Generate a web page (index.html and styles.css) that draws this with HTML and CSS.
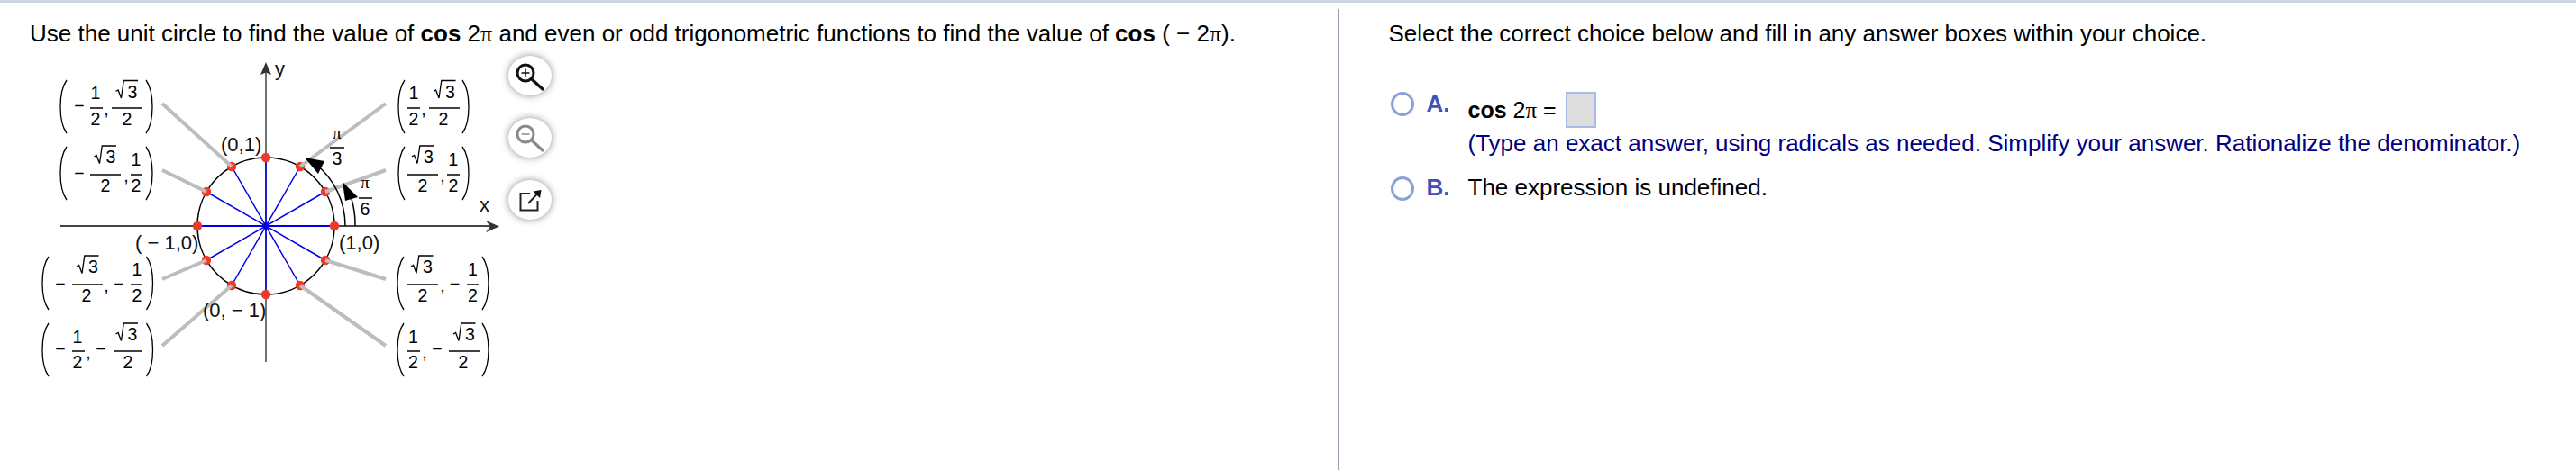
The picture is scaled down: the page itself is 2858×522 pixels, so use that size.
FILE: index.html
```html
<!DOCTYPE html>
<html lang="en">
<head>
<meta charset="utf-8">
<title>Unit circle question</title>
<link rel="stylesheet" href="styles.css">
</head>
<body>
<main class="page">
  <section class="panel-left">
    <p class="prompt">Use the unit circle to find the value of <b>cos</b> 2<span class="pi">π</span> and even or odd trigonometric functions to find the value of <b>cos</b> ( − 2<span class="pi">π</span>).</p>
    <div class="figure">
      <svg class="circle" width="524" height="360" viewBox="40 61 524 360" xmlns="http://www.w3.org/2000/svg">
        <defs>
          <path id="pl" class="paren" d="M8 0C3 7 1 17 1 29.5S3 52 8 59"/>
          <path id="pr" class="paren" d="M0 0C5 7 7 17 7 29.5S5 52 0 59"/>
          <path id="rad" class="radical" d="M0 12.5L2.6 11L6 20L8.8 .5H24.5"/>
        </defs>

        <line class="axis-x" x1="67" y1="250" x2="546" y2="250"/>
        <path class="axis-head" d="M554 250.5L539 244L544 250.5L539 257Z"/>
        <line class="axis-y" x1="295" y1="78" x2="295" y2="401"/>
        <path class="axis-head" d="M295 68L289 82L295 79.5L301 82Z"/>

        <circle class="ring" cx="295" cy="250" r="76"/>
        <g class="spokes">
          <line x1="361" y1="212" x2="229" y2="288"/>
          <line x1="333" y1="184" x2="257" y2="316"/>
          <line x1="295" y1="174" x2="295" y2="326"/>
          <line x1="257" y1="184" x2="333" y2="316"/>
          <line x1="229" y1="212" x2="361" y2="288"/>
        </g>
        <line class="spoke-h" x1="219" y1="250" x2="371" y2="250"/>
        <circle class="hub" cx="295" cy="250" r="3.5"/>

        <g class="dots">
          <circle cx="371" cy="250" r="5.2"/><circle cx="361" cy="212" r="5.2"/><circle cx="333" cy="184" r="5.2"/>
          <circle cx="295" cy="174" r="5.2"/><circle cx="257" cy="184" r="5.2"/><circle cx="229" cy="212" r="5.2"/>
          <circle cx="219" cy="250" r="5.2"/><circle cx="229" cy="288" r="5.2"/><circle cx="257" cy="316" r="5.2"/>
          <circle cx="295" cy="326" r="5.2"/><circle cx="333" cy="316" r="5.2"/><circle cx="361" cy="288" r="5.2"/>
        </g>
        <g class="leaders">
          <line x1="180" y1="114" x2="257" y2="184"/>
          <line x1="180" y1="188" x2="229" y2="212"/>
          <line x1="428" y1="114" x2="333" y2="184"/>
          <line x1="428" y1="188" x2="361" y2="212"/>
          <line x1="180" y1="309" x2="229" y2="288"/>
          <line x1="180" y1="383" x2="257" y2="316"/>
          <line x1="428" y1="309" x2="361" y2="288"/>
          <line x1="428" y1="383" x2="333" y2="316"/>
        </g>

        <path class="arc" d="M383 250A88 88 0 0 0 350 181"/>
        <path class="arc" d="M394 250A99 99 0 0 0 390 220"/>
        <path class="arrow" d="M338 174L360 178L353 192Z"/>
        <path class="arrow" d="M380 201L397 218L383 222Z"/>

        <g class="coord">
          <text x="305" y="83">y</text>
          <text x="532" y="234">x</text>
          <text x="245" y="167">(0,1)</text>
          <text x="150" y="276">( − 1,0)</text>
          <text x="376" y="276">(1,0)</text>
          <text x="225" y="351">(0, − 1)</text>
        </g>

        <g class="frac">
          <text class="pi-mark" x="374" y="153">π</text><line x1="366" y1="163" x2="382" y2="163"/><text x="374" y="182">3</text>
          <text class="pi-mark" x="405" y="208">π</text><line x1="398" y1="219" x2="413" y2="219"/><text x="405" y="238">6</text>

          <!-- row 1 left -->
          <use href="#pl" x="66" y="88"/><use href="#pr" x="162" y="88"/>
          <text x="88" y="123">−</text>
          <text x="106" y="108.5">1</text><line x1="100" y1="119" x2="114" y2="119"/><text x="106" y="138">2</text>
          <text x="118" y="127">,</text>
          <use href="#rad" x="128.5" y="88"/><text x="147" y="107.5">3</text><line x1="124" y1="119" x2="158" y2="119"/><text x="141" y="138">2</text>

          <!-- row 1 right -->
          <use href="#pl" x="441" y="88"/><use href="#pr" x="513" y="88"/>
          <text x="459" y="108.5">1</text><line x1="452" y1="119" x2="466" y2="119"/><text x="459" y="138">2</text>
          <text x="470" y="127">,</text>
          <use href="#rad" x="481" y="88"/><text x="499.5" y="107.5">3</text><line x1="476" y1="119" x2="510" y2="119"/><text x="492" y="138">2</text>

          <!-- row 2 left -->
          <use href="#pl" x="66" y="162"/><use href="#pr" x="162" y="162"/>
          <text x="88" y="198">−</text>
          <use href="#rad" x="104.5" y="160.5"/><text x="123" y="180">3</text><line x1="100" y1="193" x2="134" y2="193"/><text x="117" y="212">2</text>
          <text x="140" y="201">,</text>
          <text x="151" y="182.5">1</text><line x1="145" y1="193" x2="158" y2="193"/><text x="151" y="212">2</text>

          <!-- row 2 right -->
          <use href="#pl" x="441" y="162"/><use href="#pr" x="513" y="162"/>
          <use href="#rad" x="457" y="160.5"/><text x="475.5" y="180">3</text><line x1="452" y1="193" x2="486" y2="193"/><text x="469" y="212">2</text>
          <text x="491" y="201">,</text>
          <text x="503" y="182.5">1</text><line x1="496" y1="193" x2="510" y2="193"/><text x="503" y="212">2</text>

          <!-- row 3 left -->
          <use href="#pl" x="46" y="284"/><use href="#pr" x="162.5" y="284"/>
          <text x="67" y="321">−</text>
          <use href="#rad" x="85" y="282.5"/><text x="103.5" y="302">3</text><line x1="80" y1="315" x2="114" y2="315"/><text x="96" y="334">2</text>
          <text x="118" y="323">,</text>
          <text x="132" y="321">−</text>
          <text x="152" y="305">1</text><line x1="145" y1="315" x2="157" y2="315"/><text x="152" y="334">2</text>

          <!-- row 3 right -->
          <use href="#pl" x="440" y="284"/><use href="#pr" x="535" y="284"/>
          <use href="#rad" x="456" y="282.5"/><text x="474.5" y="302">3</text><line x1="452" y1="315" x2="486" y2="315"/><text x="469" y="334">2</text>
          <text x="491" y="323">,</text>
          <text x="504.5" y="321">−</text>
          <text x="524.5" y="305">1</text><line x1="518" y1="315" x2="531" y2="315"/><text x="524.5" y="334">2</text>

          <!-- row 4 left -->
          <use href="#pl" x="46" y="358"/><use href="#pr" x="162.5" y="358"/>
          <text x="67" y="393">−</text>
          <text x="86" y="380">1</text><line x1="80" y1="389" x2="94" y2="389"/><text x="86" y="408">2</text>
          <text x="98" y="397">,</text>
          <text x="112" y="393">−</text>
          <use href="#rad" x="128.5" y="357.5"/><text x="147" y="377">3</text><line x1="126" y1="389" x2="158" y2="389"/><text x="142" y="408">2</text>

          <!-- row 4 right -->
          <use href="#pl" x="440" y="358"/><use href="#pr" x="535" y="358"/>
          <text x="458.5" y="380">1</text><line x1="452" y1="389" x2="466" y2="389"/><text x="458.5" y="408">2</text>
          <text x="471" y="397">,</text>
          <text x="485" y="393">−</text>
          <use href="#rad" x="503" y="357.5"/><text x="521.5" y="377">3</text><line x1="498" y1="389" x2="532" y2="389"/><text x="514" y="408">2</text>
        </g>
      </svg>

      <div class="tools">
        <button class="tool" type="button" aria-label="Zoom in">
          <svg width="48" height="44" viewBox="0 0 48 44" xmlns="http://www.w3.org/2000/svg">
            <circle class="lens" cx="19" cy="19" r="9"/>
            <line class="handle" x1="26" y1="26" x2="38" y2="37"/>
            <path class="sign" d="M14.5 19H23.5M19 14.5V23.5"/>
          </svg>
        </button>
        <button class="tool tool-off" type="button" aria-label="Zoom out">
          <svg width="48" height="44" viewBox="0 0 48 44" xmlns="http://www.w3.org/2000/svg">
            <circle class="lens" cx="19" cy="18" r="9"/>
            <line class="handle" x1="26" y1="25" x2="38" y2="36"/>
            <path class="sign" d="M14.5 18H23.5"/>
          </svg>
        </button>
        <button class="tool" type="button" aria-label="Open in new window">
          <svg width="48" height="44" viewBox="0 0 48 44" xmlns="http://www.w3.org/2000/svg">
            <path class="popout" d="M24 15H13.5V33.5H32.5V23"/>
            <path class="popout" d="M22 26L33 14.5"/>
            <path class="popout-head" d="M36.5 11L27.5 12.5L35 20Z"/>
          </svg>
        </button>
      </div>
    </div>
  </section>

  <section class="panel-right">
    <p class="prompt">Select the correct choice below and fill in any answer boxes within your choice.</p>
    <div class="choices">
      <div class="choice choice-a">
        <span class="radio"></span>
        <span class="letter">A.</span>
        <div class="body">
          <div class="equation"><span><b>cos</b> 2<span class="pi">π</span> =</span><span class="answer"></span></div>
          <p class="hint">(Type an exact answer, using radicals as needed. Simplify your answer. Rationalize the denominator.)</p>
        </div>
      </div>
      <div class="choice choice-b">
        <span class="radio"></span>
        <span class="letter">B.</span>
        <div class="body">The expression is undefined.</div>
      </div>
    </div>
  </section>
</main>
</body>
</html>
```

FILE: styles.css
```css
html, body {
  margin: 0;
  padding: 0;
  background: #fff;
}

body {
  font-family: "Liberation Sans", Arial, sans-serif;
  font-size: 26px;
  line-height: 28px;
  color: #000;
}

.page {
  display: flex;
  height: 519px;
  border-top: 3px solid #ced3e0;
  overflow: hidden;
}

.panel-left {
  width: 1484px;
  flex: none;
  padding: 20px 0 0 33px;
  box-sizing: border-box;
}

.panel-right {
  flex: 1;
  margin-top: 7px;
  padding: 13px 0 0 54.5px;
  border-left: 2px solid #9a9fb6;
}

.prompt {
  margin: 0;
}

.pi {
  font-family: "Liberation Serif", "Times New Roman", serif;
}

/* figure */
.figure {
  display: flex;
  margin: 10px 0 0 7px;
}

.circle {
  display: block;
  flex: none;
}

.circle text {
  font-family: "Liberation Sans", Arial, sans-serif;
}

.circle .pi-mark {
  font-family: "Liberation Serif", "Times New Roman", serif;
}

.axis-x {
  stroke: #444;
  stroke-width: 2;
}

.axis-y {
  stroke: #444;
  stroke-width: 1.5;
}

.axis-head {
  fill: #333;
}

.ring {
  fill: none;
  stroke: #000;
  stroke-width: 1.6;
}

.spokes line {
  stroke: #0000e6;
  stroke-width: 1.5;
}

.spoke-h {
  stroke: #0000e6;
  stroke-width: 2;
}

.hub {
  fill: #0000e6;
}

.dots circle {
  fill: #ee3a2a;
}

.leaders line {
  stroke: #bdbdbd;
  stroke-width: 4;
}

.arc {
  fill: none;
  stroke: #000;
  stroke-width: 1.5;
}

.arrow {
  fill: #000;
}

.coord text {
  font-size: 22px;
  fill: #111;
}

.frac text {
  font-size: 19.5px;
  text-anchor: middle;
  fill: #000;
}

.frac line {
  stroke: #000;
  stroke-width: 1.5;
}

.paren {
  fill: none;
  stroke: #000;
  stroke-width: 1.3;
}

.radical {
  fill: none;
  stroke: #000;
  stroke-width: 1.3;
}

/* zoom tools */
.tools {
  display: flex;
  flex-direction: column;
  gap: 25px;
}

.tool {
  display: block;
  width: 48px;
  height: 44px;
  padding: 0;
  border: 0;
  border-radius: 50%;
  background: #fff;
  box-shadow: 0 0 9px rgba(0, 0, 0, 0.45);
  color: #111;
}

.tool svg {
  display: block;
}

.tool-off {
  color: #8a8a8a;
}

.lens {
  fill: none;
  stroke: currentColor;
  stroke-width: 3;
}

.handle {
  stroke: currentColor;
  stroke-width: 3.2;
  stroke-linecap: round;
}

.sign {
  fill: none;
  stroke: currentColor;
  stroke-width: 1.5;
}

.popout {
  fill: none;
  stroke: #222;
  stroke-width: 2;
}

.popout-head {
  fill: #111;
}

/* choices */
.choices {
  margin-top: 51px;
}

.choice {
  display: flex;
  align-items: flex-start;
}

.choice-b {
  margin-top: 21px;
}

.radio {
  flex: none;
  box-sizing: border-box;
  width: 26px;
  height: 27px;
  margin-left: 2.5px;
  border: 3px solid #8aa0d8;
  border-radius: 50%;
  background: #fff;
}

.choice-b .radio {
  margin-top: 1.5px;
}

.letter {
  flex: none;
  width: 46px;
  margin-left: 13.5px;
  font-weight: bold;
  color: #3f52b8;
}

.choice-a .letter {
  margin-top: -1px;
}

.equation {
  display: flex;
  align-items: center;
  gap: 10px;
  height: 40px;
  font-size: 25px;
}

.answer {
  box-sizing: border-box;
  width: 34px;
  height: 40px;
  border: 2px solid #a9bce6;
  background: #dedede;
}

.hint {
  margin: 3px 0 0;
  color: #000080;
}
```
